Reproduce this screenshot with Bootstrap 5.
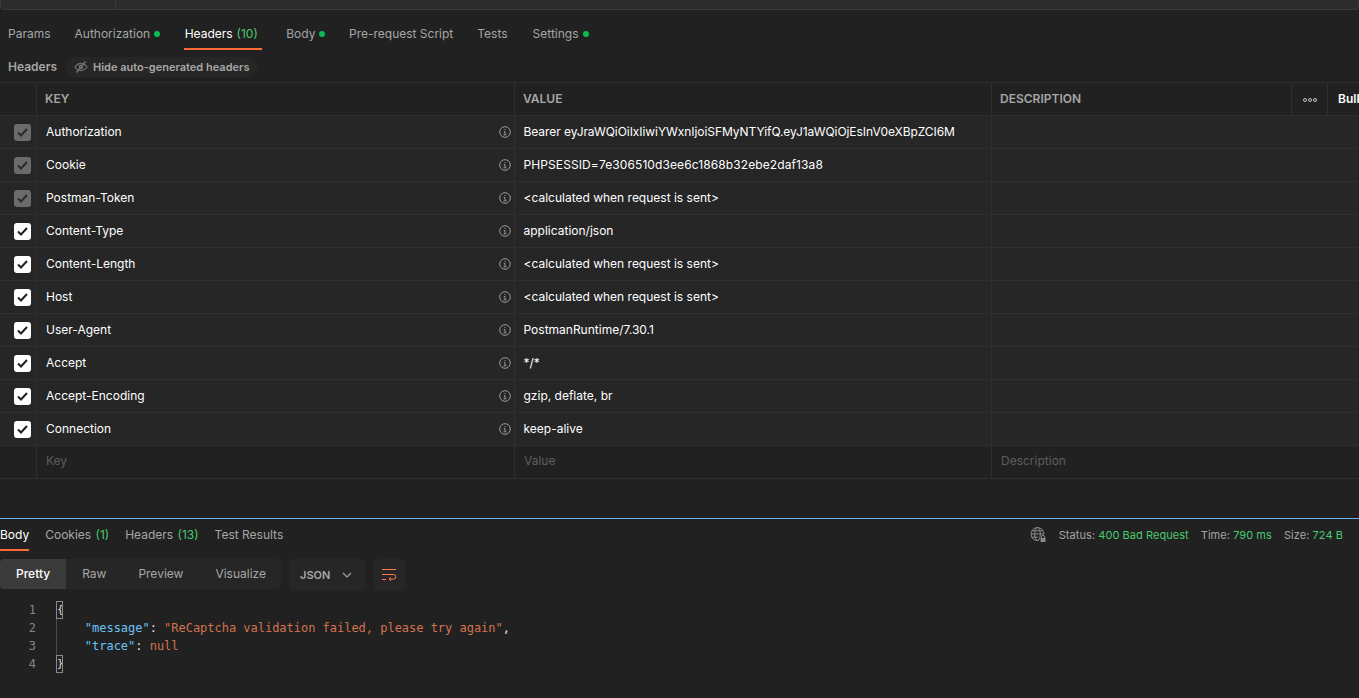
<!DOCTYPE html>
<html lang="en">
<head>
<meta charset="utf-8">
<title>Postman</title>
<link href="https://cdn.jsdelivr.net/npm/bootstrap@5.3.0/dist/css/bootstrap.min.css" rel="stylesheet">
<style>
html,body{height:698px;overflow:hidden}
body{background:#212121;color:#fff;font-family:Inter,"Liberation Sans",sans-serif;font-size:12px;line-height:16px}
.pm-url{height:10px;border:1px solid #3a3a3a;border-top:0;border-radius:0 0 4px 4px;background:#2b2b2b;display:flex}
.pm-url-method{width:115px;border-right:1px solid #3a3a3a}
.pm-tabs{height:40px;padding-left:8px;gap:24px;align-items:flex-start}
.pm-tab{color:#a6a6a6;padding:16px 0 7px;height:40px;position:relative;white-space:nowrap}
.pm-tab.on{color:#fff;padding-left:1px;padding-right:4.500px}
.pm-tab.on .pm-green{margin-left:.5px}
.pm-tab.pm-nudge{margin-right:1px}
.pm-tab.on::after{content:"";position:absolute;left:0;right:0;bottom:0;height:2px;background:#ff6c37}
.pm-green{color:#49c96f}
.pm-dot{display:inline-block;width:6px;height:6px;border-radius:50%;background:#0cbb52;margin-left:4px;margin-right:-.5px;vertical-align:1px}
.pm-sub{height:32px;padding-left:8px;padding-top:2px;align-items:center;gap:8px}
.pm-sub-title{font-weight:600;color:#a6a6a6}
.pm-pill{height:20px;background:#262626;border-radius:10px;color:#a6a6a6;font-size:11px;font-weight:600;padding:0 9px;display:flex;align-items:center;gap:5px}
.pm-wrap{overflow:hidden;height:436px}
.pm-table{table-layout:fixed;width:1359px;border-collapse:separate;border-spacing:0;margin:0;--bs-table-bg:transparent;--bs-table-color:#fff;color:#fff}
.pm-table th,.pm-table td{height:33px;padding:0 8px;border:0;border-top:1px solid #2f2f2f;border-right:1px solid #2f2f2f;vertical-align:middle;white-space:nowrap;overflow:hidden;font-weight:400;color:#fff;background:transparent;box-shadow:none}
.pm-table tr:last-child td{border-bottom:1px solid #2f2f2f;height:34px;padding-bottom:3px}
.pm-table td:last-child,.pm-table th:last-child{border-right:0}
.pm-table tbody tr.filled td{background:#262626}
.pm-table th{color:#a6a6a6;font-weight:600}
.pm-table th.pm-bulk{color:#fff;padding-left:10px}
.pm-table td.pm-key{padding-left:9px;position:relative;padding-right:30px}
.pm-table td.pm-ph{color:#5e5e5e;padding-left:9px}
.pm-table td.pm-c{padding:0 0 0 14px;text-align:left}
.pm-table th.pm-more{padding:0;text-align:center}
.pm-check{width:17px;height:17px;border-radius:3px;background:#fff;display:flex;align-items:center;justify-content:center}
.pm-check.off{background:#6b6b6b}
.pm-info{position:absolute;right:3px;top:10px;width:12px;height:12px;display:block}
.pm-table td.pm-val{padding-left:8.500px}
.pm-tight{letter-spacing:-.06px}
.pm-wide{letter-spacing:.1px}
.pm-resp{border-top:1px solid #6cb3f5;height:180px}
.pm-resp-bar{height:32px;align-items:flex-start;justify-content:space-between}
.pm-rtabs{gap:16px}
.pm-rtab{color:#a6a6a6;padding:8px 0 7px;height:32px;position:relative;white-space:nowrap}
.pm-rtab .pm-green{margin-left:1px}
.pm-rtab.on{color:#fff}
.pm-rtab.on::after{content:"";position:absolute;left:0;right:0;bottom:0;height:2px;background:#ff6c37}
.pm-status{color:#a6a6a6;font-size:11px;padding-top:8px;gap:12px;padding-right:16px;align-items:center;letter-spacing:.005em}
.pm-status b{font-weight:400;color:#49c96f}
.pm-status svg{margin-right:1px}
.pm-tools{gap:8px;padding-top:8px;align-items:flex-start}
.pm-seg{display:flex;background:#262626;border-radius:4px;height:30px;width:281px}
.pm-seg span{color:#a6a6a6;padding:0 16px;line-height:30px;display:block;border-radius:4px 0 0 4px}
.pm-seg span.on{background:#3b3b3b;color:#fff;font-weight:500}
.pm-json{width:76px;height:32px;border-radius:4px;background:#262626;color:#a6a6a6;font-size:11px;font-weight:600;display:flex;align-items:center;justify-content:space-between;padding:0 13px 0 11px}
.pm-wrapbtn{width:32px;height:32px;border-radius:4px;background:#262626;display:flex;align-items:center;justify-content:center}
.pm-code{margin-top:10px;font-family:"DejaVu Sans Mono","Liberation Mono",monospace;font-size:12px;line-height:18px;position:relative}
.pm-ln{display:flex;height:18px}
.pm-no{width:36px;text-align:right;color:#7f8a83}
.pm-txt{padding-left:20px;color:#e0e0e0;white-space:pre;letter-spacing:-.02px}
.pm-k{color:#6cc1f7}
.pm-s{color:#d4724f}
.pm-brace{display:block;width:7px;height:18px;border:1px solid #8a8a8a;line-height:16px;overflow:hidden;text-align:center;color:#ddd;font-size:11px}
.pm-guide{position:absolute;left:56px;top:18px;height:36px;border-left:1px solid #4a4a4a}
</style>
</head>
<body>
<div class="pm-url"><div class="pm-url-method"></div></div>
<nav class="d-flex pm-tabs">
  <div class="pm-tab">Params</div>
  <div class="pm-tab">Authorization<span class="pm-dot"></span></div>
  <div class="pm-tab on">Headers <span class="pm-green">(10)</span></div>
  <div class="pm-tab">Body<span class="pm-dot"></span></div>
  <div class="pm-tab">Pre-request Script</div>
  <div class="pm-tab pm-nudge">Tests</div>
  <div class="pm-tab">Settings<span class="pm-dot"></span></div>
</nav>
<div class="d-flex pm-sub">
  <div class="pm-sub-title">Headers</div>
  <div class="pm-pill">
    <svg width="14" height="12" viewBox="0 0 14 12" fill="none" stroke="#6e6e6e" stroke-width="1.300"><path d="M1 6c1.500-2.300 3.500-3.500 6-3.500S11.500 3.700 13 6c-1.500 2.300-3.500 3.500-6 3.500S2.500 8.300 1 6z"/><circle cx="7" cy="6" r="1.700"/><path d="M2.500 11.500 11.500.5" stroke-width="1.600"/></svg>
    Hide auto-generated headers
  </div>
</div>
<div class="pm-wrap">
<table class="table pm-table">
  <colgroup><col style="width:37px"><col style="width:478px"><col style="width:477px"><col style="width:300px"><col style="width:36px"><col></colgroup>
  <thead><tr>
    <th></th><th>KEY</th><th>VALUE</th><th>DESCRIPTION</th>
    <th class="pm-more"><svg width="14" height="4" viewBox="0 0 14 4" fill="none" stroke="#c4c4c4"><circle cx="2" cy="2" r="1.500"/><circle cx="7" cy="2" r="1.500"/><circle cx="12" cy="2" r="1.500"/></svg></th>
    <th class="pm-bulk">Bulk Edit</th>
  </tr></thead>
  <tbody id="rows"></tbody>
</table>
</div>
<section class="pm-resp">
  <div class="d-flex pm-resp-bar">
    <div class="d-flex pm-rtabs">
      <div class="pm-rtab on">Body</div>
      <div class="pm-rtab">Cookies <span class="pm-green">(1)</span></div>
      <div class="pm-rtab">Headers <span class="pm-green">(13)</span></div>
      <div class="pm-rtab">Test Results</div>
    </div>
    <div class="d-flex pm-status">
      <svg width="16" height="16" viewBox="0 0 16 16" fill="none" stroke="#8a8a8a" stroke-width="1"><path d="M8.500 13.500A6.500 6.500 0 1 1 14 7"/><ellipse cx="7.500" cy="7" rx="2.800" ry="6.500"/><path d="M1 7h13M2 3.800h11M2 10.200h6"/><rect x="10.500" y="11" width="5" height="4" rx=".5" fill="#8a8a8a" stroke="none"/><path d="M11.500 11V9.800a1.500 1.500 0 0 1 3 0V11"/></svg>
      <div>Status: <b>400 Bad Request</b></div>
      <div>Time: <b>790 ms</b></div>
      <div>Size: <b>724 B</b></div>
    </div>
  </div>
  <div class="d-flex pm-tools">
    <div class="pm-seg"><span class="on">Pretty</span><span>Raw</span><span>Preview</span><span>Visualize</span></div>
    <div class="pm-json">JSON <svg width="10" height="6" viewBox="0 0 10 6" fill="none" stroke="#a6a6a6" stroke-width="1.100"><path d="M1 1l4 4 4-4"/></svg></div>
    <div class="pm-wrapbtn"><svg width="16" height="14" viewBox="0 0 16 14" fill="none" stroke="#ff7a4a" stroke-width="1"><path d="M1 1.500h14M1 6.500h11.500a2.300 2.300 0 0 1 0 4.600H8M10 9.300 8 11.100l2 1.800M1 11.500h4"/></svg></div>
  </div>
  <div class="pm-code">
    <div class="pm-guide"></div>
    <div class="pm-ln"><div class="pm-no">1</div><div class="pm-txt"><span class="pm-brace">{</span></div></div>
    <div class="pm-ln"><div class="pm-no">2</div><div class="pm-txt">    <span class="pm-k">"message"</span>: <span class="pm-s">"ReCaptcha validation failed, please try again"</span>,</div></div>
    <div class="pm-ln"><div class="pm-no">3</div><div class="pm-txt">    <span class="pm-k">"trace"</span>: <span class="pm-s">null</span></div></div>
    <div class="pm-ln"><div class="pm-no">4</div><div class="pm-txt"><span class="pm-brace">}</span></div></div>
  </div>
</section>
<script>
var data=[["Authorization","Bearer eyJraWQiOiIxIiwiYWxnIjoiSFMyNTYifQ.eyJ1aWQiOjEsInV0eXBpZCI6M",1],["Cookie","PHPSESSID=7e306510d3ee6c1868b32ebe2daf13a8",1],["Postman-Token","<calculated when request is sent>",1],["Content-Type","application/json",0],["Content-Length","<calculated when request is sent>",0],["Host","<calculated when request is sent>",0],["User-Agent","PostmanRuntime/7.30.1",0],["Accept","*/*",0],["Accept-Encoding","gzip, deflate, br",0],["Connection","keep-alive",0]];
var esc=function(s){return s.replace(/&/g,"&amp;").replace(/</g,"&lt;")};
var h=data.map(function(r,i){
 var col=r[2]?"#2b2b2b":"#212121";
 var extra=i==0?' pm-tight':(i==1?' pm-wide':'');
 return '<tr class="filled"><td class="pm-c"><span class="pm-check'+(r[2]?' off':'')+'"><svg width="11" height="9" viewBox="0 0 11 9" fill="none" stroke="'+col+'" stroke-width="2"><path d="M1 4.500 4 7.500 10 1"/></svg></span></td><td class="pm-key">'+esc(r[0])+'<svg class="pm-info" viewBox="0 0 12 12" fill="none" stroke="#9a9a9a"><circle cx="6" cy="6" r="5.300"/><path d="M6 3v1M4.800 5.500H6v3M4.500 8.800h3"/></svg></td><td class="pm-val'+extra+'">'+esc(r[1])+'</td><td colspan="3"></td></tr>';
}).join("");
h+='<tr><td></td><td class="pm-ph">Key</td><td class="pm-ph">Value</td><td class="pm-ph" colspan="3">Description</td></tr>';
document.getElementById("rows").innerHTML=h;
</script>
<script src="https://cdn.jsdelivr.net/npm/bootstrap@5.3.0/dist/js/bootstrap.bundle.min.js"></script>
</body>
</html>
